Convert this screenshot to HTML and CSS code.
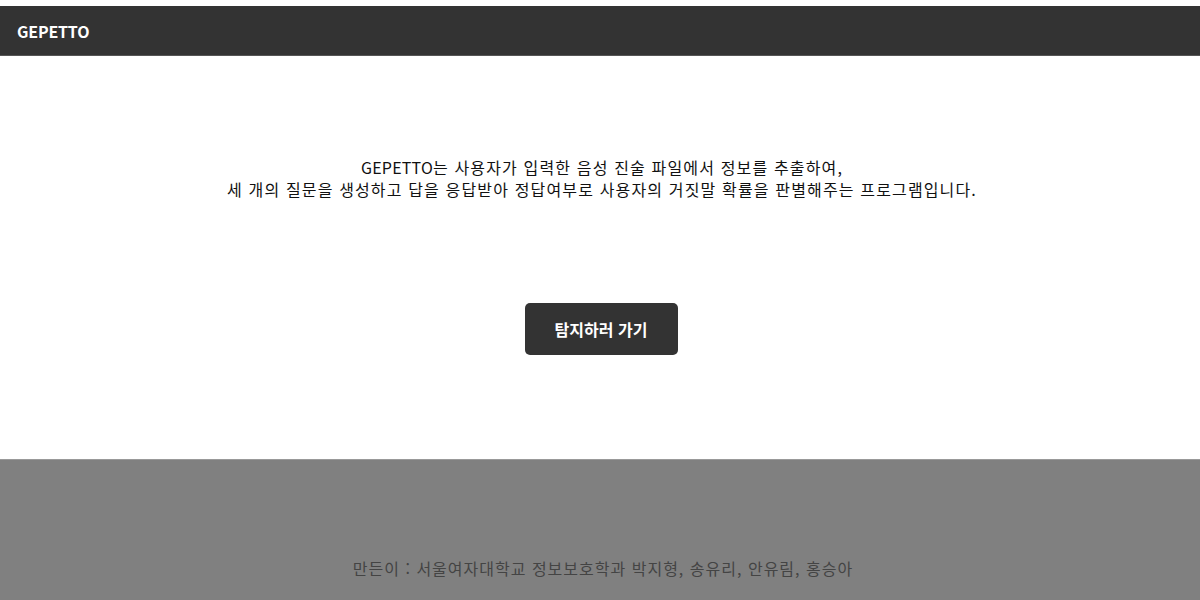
FILE: index.html
```html
<!DOCTYPE html>
<html lang="ko">
<head>
<meta charset="utf-8">
<title>GEPETTO</title>
<link rel="stylesheet" href="styles.css">
</head>
<body>
<header class="topbar">
  <span class="brand">GEPETTO</span>
</header>
<main class="main">
  <p class="intro"><span class="latin">GEPETTO</span>는 사용자가 입력한 음성 진술 파일에서 정보를 추출하여,<br>세 개의 질문을 생성하고 답을 응답받아 정답여부로 사용자의 거짓말 확률을 판별해주는 프로그램입니다.</p>
  <button class="go" type="button">탐지하러 가기</button>
</main>
<footer class="footer">
  <p class="credits">만든이 : 서울여자대학교 정보보호학과 박지형, 송유리, 안유림, 홍승아</p>
</footer>
</body>
</html>
```
FILE: styles.css
```css
html, body {
  margin: 0;
  padding: 0;
  background: #fff;
  font-family: "Noto Sans CJK KR", "Noto Sans", sans-serif;
}
body {
  padding-top: 6px;
}
.topbar {
  height: 50px;
  background: #333333;
  display: flex;
  align-items: center;
  padding-left: 17px;
  border-bottom: 1px solid #555;
  box-sizing: border-box;
}
.brand {
  color: #fff;
  font-weight: 700;
  font-size: 16px;
  letter-spacing: -0.2px;
}
.main {
  height: 403px;
  display: flex;
  flex-direction: column;
  align-items: center;
}
.intro {
  margin: 100px 0 0;
  padding-left: 4px;
  text-align: center;
  font-size: 16px;
  line-height: 22px;
  letter-spacing: 1.15px;
  color: #111;
}
.latin {
  letter-spacing: 0.2px;
}
.go {
  margin-top: 103px;
  width: 153px;
  height: 52px;
  background: #333;
  color: #fff;
  border: none;
  border-radius: 5px;
  font-family: inherit;
  font-size: 16px;
  font-weight: 700;
  margin-left: 2px;
}
.footer {
  background: #808080;
  height: 141px;
  border-top: 1px solid #999;
  box-sizing: border-box;
  display: flex;
  justify-content: center;
  align-items: flex-end;
}
.credits {
  margin: 0 0 20px 6px;
  font-size: 16px;
  letter-spacing: 1px;
  color: #444;
}
```
